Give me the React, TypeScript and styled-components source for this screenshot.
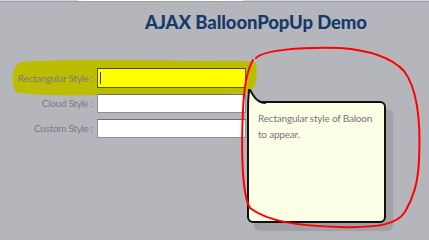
import styled, { createGlobalStyle } from "styled-components";

const GlobalStyle = createGlobalStyle`
    body {
        margin: 0;
        background: #b5b6bb;
        font-family: Lato, "Open Sans", sans-serif;
    }
`;

function App() {
    return (
        <>
            <GlobalStyle />
            <Page>
                <TopStrip>
                    <StripTab />
                </TopStrip>
                <Title>AJAX BalloonPopUp Demo</Title>

                <Form>
                    <Row>
                        <Label>Rectangular Style :</Label>
                        <Field $active>
                            <Caret />
                        </Field>
                    </Row>
                    <Row>
                        <Label>Cloud Style :</Label>
                        <Field />
                    </Row>
                    <Row>
                        <Label>Custom Style :</Label>
                        <Field />
                    </Row>
                </Form>

                <Highlight viewBox="0 0 429 240" width="429" height="240">
                    <path
                        d="M 20 62 C 60 59, 150 60, 200 61 C 230 61, 250 60, 256 63 C 258 75, 256 88, 250 93 C 220 95, 150 94, 90 95 C 60 96, 30 95, 16 92 C 11 85, 11 68, 20 62 Z"
                        fill="#bdbd00"
                    />
                </Highlight>

                <Balloon>
                    <Tail viewBox="0 0 22 16" width="22" height="16">
                        <path d="M 2 0 C 2 5, 1 10, 1 16 L 19 16 C 13 14, 9 11, 6 6 C 5 4, 4 2, 2 0 Z" fill="#fdfee6" />
                        <path d="M 1 16 C 1 10, 2 5, 2 0 C 4 2, 5 4, 6 6 C 9 11, 13 14, 19 14" fill="none" stroke="#111" strokeWidth="2" />
                    </Tail>
                    <BalloonText>Rectangular style of Baloon to appear.</BalloonText>
                </Balloon>

                <Scribble viewBox="0 0 429 240" width="429" height="240">
                    <path
                        d="M 256 58 C 264 50, 300 47, 340 48 C 368 50, 390 56, 404 71 C 417 88, 421 120, 419 160 C 418 184, 413 198, 405 212 C 397 224, 380 228, 340 227 C 300 226, 268 222, 250 208 C 242 195, 241 150, 243 110 C 244 86, 247 70, 253 60"
                        fill="none"
                        stroke="#ff0000"
                        strokeWidth="2"
                        strokeLinecap="round"
                    />
                </Scribble>
            </Page>
        </>
    );
}

const Page = styled.div`
    position: relative;
    width: 429px;
    height: 240px;
    overflow: hidden;
`;

const TopStrip = styled.div`
    height: 1px;
    background: #d3d6dc;
    border-bottom: 1px solid #9c9ea3;
    padding-left: 78px;
`;

const StripTab = styled.div`
    width: 165px;
    height: 1px;
    background: #ffffff;
`;

const Title = styled.h1`
    margin: 8px 0 0 145px;
    font-family: Lato, "Open Sans", sans-serif;
    font-weight: 900;
    font-size: 18.5px;
    line-height: 24px;
    color: #173a6b;
    letter-spacing: -0.1px;
    white-space: nowrap;
`;

const Form = styled.div`
    position: relative;
    z-index: 2;
    margin-top: 34px;
    display: flex;
    flex-direction: column;
    gap: 5px;
`;

const Row = styled.div`
    display: grid;
    grid-template-columns: 93px 149px;
    column-gap: 4px;
    align-items: center;
    height: 20px;
`;

const Label = styled.span`
    text-align: right;
    font-size: 10px;
    letter-spacing: -0.3px;
    color: #7b7b82;
    white-space: nowrap;
`;

const Field = styled.div<{ $active?: boolean }>`
    position: relative;
    box-sizing: border-box;
    height: ${(p) => (p.$active ? "20px" : "19px")};
    background: ${(p) => (p.$active ? "#ffff00" : "#ffffff")};
    border: 1px solid ${(p) => (p.$active ? "#5c5c10" : "#8e8f95")};
    border-top-color: ${(p) => (p.$active ? "#4a4a00" : "#6e6f75")};
`;

const Caret = styled.span`
    position: absolute;
    left: 2px;
    top: 3px;
    width: 1px;
    height: 12px;
    background: #333;
`;

const Highlight = styled.svg`
    position: absolute;
    left: 0;
    top: 0;
    z-index: 1;
`;

const Balloon = styled.div`
    position: absolute;
    z-index: 3;
    left: 247px;
    top: 101px;
    box-sizing: border-box;
    width: 139px;
    height: 122px;
    padding: 7px 2px 0 9px;
    background: #fdfee6;
    border: 2px solid #111;
    border-radius: 6px;
    box-shadow: 7px 8px 1px rgba(120, 120, 128, 0.35);
`;

const Tail = styled.svg`
    position: absolute;
    left: -2px;
    top: -14px;
`;

const BalloonText = styled.p`
    margin: 0;
    font-size: 10px;
    line-height: 16px;
    letter-spacing: -0.2px;
    color: #76767c;
`;

const Scribble = styled.svg`
    position: absolute;
    left: 0;
    top: 0;
    z-index: 4;
    pointer-events: none;
`;

export default App;
